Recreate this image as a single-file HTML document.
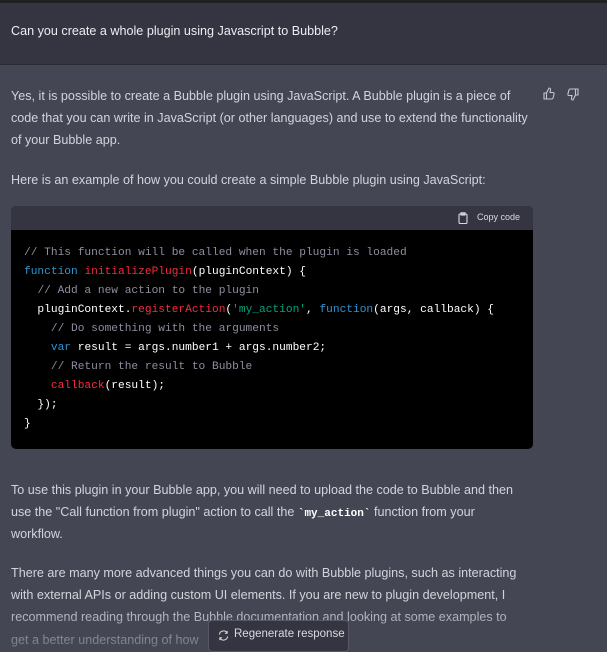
<!DOCTYPE html>
<html><head><meta charset="utf-8"><style>
*{margin:0;padding:0;box-sizing:border-box}
body{width:607px;height:650px;overflow:hidden;background:#444654;font-family:"Liberation Sans",sans-serif;color:#d1d5db;position:relative}
.top{position:absolute;left:0;top:0;width:607px;height:3px;background:#202123}
.user{position:absolute;left:0;top:3px;width:607px;height:62px;background:#343541;border-bottom:1px solid #2a2b32;color:#ececf1}
.t{position:absolute;left:11px;font-size:12.6px;white-space:nowrap;letter-spacing:0px}
.code{position:absolute;left:11px;top:206px;width:522px;height:243px;background:#000;border-radius:5px;overflow:hidden}
.ch{height:24px;background:#343541;position:relative;font-size:9px;color:#d9d9e3}
.ch span{position:absolute;right:13px;top:6px}
.cl{position:absolute;left:13px;font-family:"Liberation Mono",monospace;font-size:11.2px;color:#fff;white-space:pre}
.c{color:#8e8ea0}.k{color:#2e95d3}.f{color:#f22c3d}.s{color:#00a67d}
.reg{position:absolute;left:208px;top:620px;width:141px;height:32px;background:#343541;border:1px solid #565869;border-radius:4px;color:#d9d9e3;font-size:11.5px;padding:7px 0 0 25px}
.fade{position:absolute;left:0;top:600px;width:607px;height:50px;background:linear-gradient(rgba(68,70,84,0),rgba(68,70,84,0.7))}
</style></head><body>
<div class="top"></div>
<div class="user"><div class="t" style="top:21px">Can you create a whole plugin using Javascript to Bubble?</div></div>
<div class="t" style="top:89px">Yes, it is possible to create a Bubble plugin using JavaScript. A Bubble plugin is a piece of</div>
<div class="t" style="top:111px">code that you can write in JavaScript (or other languages) and use to extend the functionality</div>
<div class="t" style="top:133px">of your Bubble app.</div>
<div class="t" style="top:173px">Here is an example of how you could create a simple Bubble plugin using JavaScript:</div>
<svg style="position:absolute;left:542px;top:87px" width="40" height="14" viewBox="0 0 40 14" fill="none" stroke="#c5c5d2" stroke-width="1.1"><path d="M2 6h2.5v6H2zM4.5 6l2.5-5c1.2 0 1.8.8 1.5 2L8 5.5h3c.8 0 1.3.7 1.1 1.4l-1 4c-.2.7-.7 1.1-1.4 1.1H4.5"/><path d="M36 8h-2.5V2H36zM33.5 8l-2.5 5c-1.2 0-1.8-.8-1.5-2L30 8.5h-3c-.8 0-1.3-.7-1.1-1.4l1-4c.2-.7.7-1.1 1.4-1.1h5.2"/></svg>
<div class="code">
<div class="ch"><svg style="position:absolute;left:447px;top:6px" width="10" height="12" viewBox="0 0 10 12" fill="none" stroke="#d9d9e3" stroke-width="1.1"><rect x="1" y="2" width="8" height="9.5" rx="1"/><rect x="3" y="0.8" width="4" height="2.2"/></svg><span>Copy code</span></div>
<div class="cl" style="top:41px"><span class="c">// This function will be called when the plugin is loaded</span></div>
<div class="cl" style="top:60px"><span class="k">function</span> <span class="f">initializePlugin</span>(pluginContext) {</div>
<div class="cl" style="top:79px">  <span class="c">// Add a new action to the plugin</span></div>
<div class="cl" style="top:98px">  pluginContext.<span class="f">registerAction</span>(<span class="s">'my_action'</span>, <span class="k">function</span>(args, callback) {</div>
<div class="cl" style="top:117px">    <span class="c">// Do something with the arguments</span></div>
<div class="cl" style="top:136px">    <span class="k">var</span> result = args.number1 + args.number2;</div>
<div class="cl" style="top:155px">    <span class="c">// Return the result to Bubble</span></div>
<div class="cl" style="top:174px">    <span class="f">callback</span>(result);</div>
<div class="cl" style="top:193px">  });</div>
<div class="cl" style="top:212px">}</div>
</div>
<div class="t" style="top:483px">To use this plugin in your Bubble app, you will need to upload the code to Bubble and then</div>
<div class="t" style="top:505px">use the "Call function from plugin" action to call the <b style="font-family:'Liberation Mono',monospace;font-size:11px;color:#fff">`my_action`</b> function from your</div>
<div class="t" style="top:527px">workflow.</div>
<div class="t" style="top:566px">There are many more advanced things you can do with Bubble plugins, such as interacting</div>
<div class="t" style="top:588px">with external APIs or adding custom UI elements. If you are new to plugin development, I</div>
<div class="t" style="top:610px">recommend reading through the Bubble documentation and looking at some examples to</div>
<div class="t" style="top:633px">get a better understanding of how</div>
<div class="fade"></div>
<div class="reg"><svg style="position:absolute;left:9px;top:9px" width="11" height="11" viewBox="0 0 12 12" fill="none" stroke="#d9d9e3" stroke-width="1.1"><path d="M1.5 5A4.5 4.5 0 0 1 10 3.5M10.5 7A4.5 4.5 0 0 1 2 8.5M10 1v2.5H7.5M2 11V8.5h2.5"/></svg>Regenerate response</div>
</body></html>
